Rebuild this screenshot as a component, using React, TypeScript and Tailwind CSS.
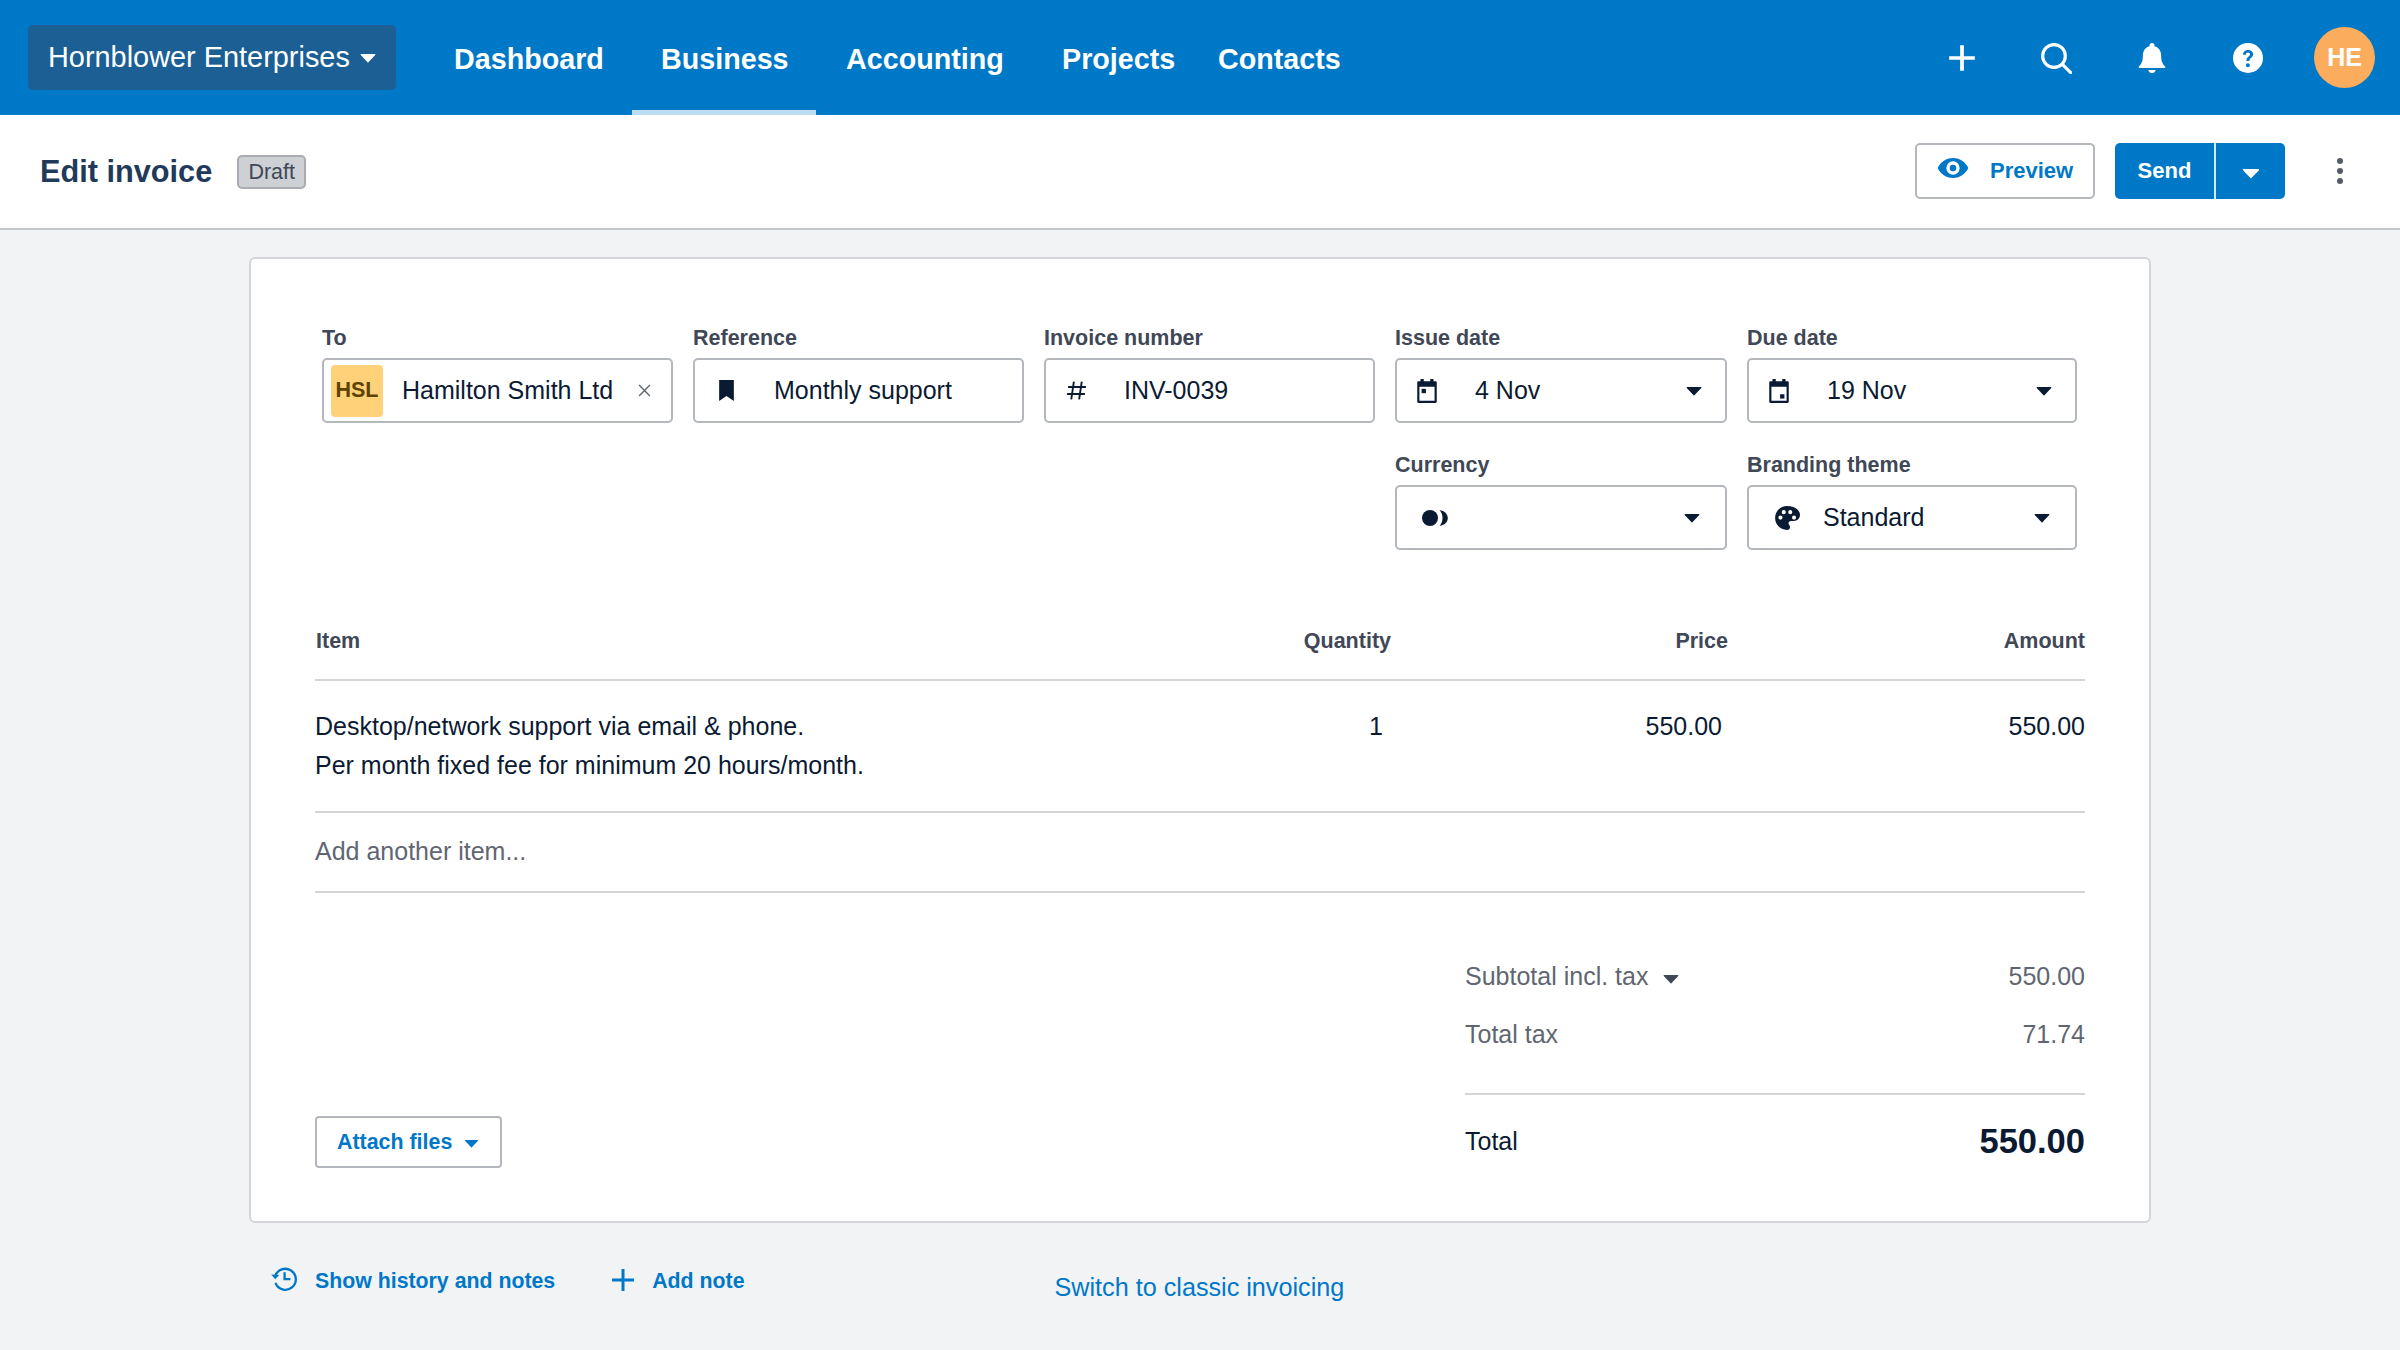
import React from "react";

const Caret = ({ className = "" }: { className?: string }) => (
  <svg viewBox="0 0 16 10" className={className} fill="currentColor">
    <path d="M1.2 1h13.6a.6.6 0 0 1 .45 1L8.4 9.2a.6.6 0 0 1-.85 0L.75 2a.6.6 0 0 1 .45-1z" />
  </svg>
);

const Calendar = ({ dot }: { dot: "left" | "right" }) => (
  <svg viewBox="0 0 24 24" className="w-[26px] h-[26px] text-[#0b1a33]" fill="currentColor">
    <path d="M6 1h3v2h6V1h3v2h2a1 1 0 0 1 1 1v18a1 1 0 0 1-1 1H4a1 1 0 0 1-1-1V4a1 1 0 0 1 1-1h2V1zM5 8v13h14V8H5z" />
    {dot === "left" ? <rect x="7" y="10" width="4" height="4" /> : <rect x="13" y="15" width="4" height="4" />}
  </svg>
);

const Label = ({ children }: { children: React.ReactNode }) => (
  <div className="text-[21.5px] leading-[26px] font-bold text-[#404756] mb-[7px]">{children}</div>
);

const Box = ({ className = "", children }: { className?: string; children: React.ReactNode }) => (
  <div className={`h-[65px] flex items-center bg-white border-2 border-[#b4b8bd] rounded-[5px] text-[25px] text-[#0b1a33] ${className}`}>
    {children}
  </div>
);

const Nav = ({ w, pl, active, children }: { w: string; pl: string; active?: boolean; children: React.ReactNode }) => (
  <div className={`${w} ${pl} h-full flex items-center text-[28.7px] font-bold text-white border-b-[5px] ${active ? "border-[#bcdcf3]" : "border-transparent"}`}>
    <span className="relative top-[5px]">{children}</span>
  </div>
);

export default function App() {
  return (
    <div className="w-[2400px] h-[1350px] overflow-hidden flex flex-col bg-[#f2f3f5] font-['Liberation_Sans',Arial,sans-serif]">
      <header className="h-[115px] shrink-0 bg-[#0078c8] flex items-stretch pl-[28px] pr-[25px]">
        <div className="self-start mt-[25px] w-[368px] h-[65px] rounded-[5px] bg-[#1c5f94] flex items-center pl-[20px] gap-[10px] text-white text-[28.9px]">
          <span>Hornblower Enterprises</span>
          <Caret className="w-[16px] h-[10px]" />
        </div>
        <nav className="ml-[29px] flex h-full">
          <Nav w="w-[207px]" pl="pl-[29px]">Dashboard</Nav>
          <Nav w="w-[184px]" pl="pl-[29px]" active>Business</Nav>
          <Nav w="w-[216px]" pl="pl-[30px]">Accounting</Nav>
          <Nav w="w-[164px]" pl="pl-[30px]">Projects</Nav>
          <Nav w="w-[200px]" pl="pl-[22px]">Contacts</Nav>
        </nav>
        <div className="ml-auto flex items-center">
          <div className="w-[96px] flex justify-center">
            <svg viewBox="0 0 24 24" className="w-[28px] h-[28px] text-white" fill="none" stroke="currentColor" strokeWidth="3.2"><path d="M12 1v22M1 12h22" /></svg>
          </div>
          <div className="w-[94px] flex justify-center -ml-[1px] mr-[1px]">
            <svg viewBox="0 0 24 24" className="w-[32px] h-[32px] text-white" fill="none" stroke="currentColor" strokeWidth="2.4" strokeLinecap="round"><circle cx="10.5" cy="10.5" r="8.5" /><path d="M17 17l6 6" /></svg>
          </div>
          <div className="w-[96px] flex justify-center">
            <svg viewBox="0 0 24 24" className="w-[30px] h-[30px] text-white" fill="currentColor"><path d="M12 0a2 2 0 0 1 2 2v.6c3.4.9 5.3 3.8 5.3 7.4 0 4.4 1 6.6 3.2 8.8.4.5.2 1.2-.6 1.2H2.100c-.8 0-1-.7-.6-1.2C3.700 16.600 4.700 14.400 4.700 10c0-3.600 1.900-6.500 5.300-7.400V2a2 2 0 0 1 2-2zM9 21.500h6c-.4 1.500-1.600 2.500-3 2.500s-2.600-1-3-2.500z" /></svg>
          </div>
          <div className="w-[95px] flex justify-center">
            <svg viewBox="0 0 24 24" className="w-[30px] h-[30px]"><circle cx="12" cy="12" r="12" fill="#fff" /><path d="M8 9.300c0-2.400 1.800-3.800 4.100-3.800 2.300 0 4 1.300 4 3.400 0 2.800-3 2.900-3 5.400h-2.400c0-3.300 2.900-3.400 2.900-5.300 0-.9-.6-1.500-1.600-1.500-1.100 0-1.700.7-1.700 1.800H8z" fill="#0078c8" /><circle cx="11.900" cy="17.700" r="1.600" fill="#0078c8" /></svg>
          </div>
          <div className="ml-[19px] w-[61px] h-[61px] rounded-full bg-[#fbad5d] flex items-center justify-center text-white font-bold text-[25px]">HE</div>
        </div>
      </header>

      <div className="h-[115px] shrink-0 bg-white border-b-2 border-[#c3c6ca] flex items-center pl-[40px] pr-[57px]">
        <h1 className="text-[30.7px] font-bold text-[#223a5a] mt-[2px]">Edit invoice</h1>
        <span className="ml-[25px] w-[69px] h-[34px] mt-[1px] flex items-center justify-center rounded-[5px] bg-[#cdd0d4] border-2 border-[#a9adb3] text-[#404756] text-[21.5px]">Draft</span>
        <div className="ml-auto flex items-center h-[56px] -mt-[2px]">
          <div className="w-[180px] h-[56px] flex items-center pl-[20px] gap-[21px] border-2 border-[#b4b8bd] rounded-[5px] bg-white text-[#0078c8] font-bold text-[22px]">
            <svg viewBox="0 0 24 24" className="w-[32px] h-[32px] -mt-[6px]" fill="currentColor"><path fillRule="evenodd" d="M12 4.500C6.500 4.500 2.300 8 .5 12c1.800 4 6 7.500 11.500 7.500S21.700 16 23.500 12c-1.800-4-6-7.500-11.500-7.500zM12 7a5 5 0 1 1 0 10 5 5 0 0 1 0-10zm0 2.500a2.500 2.500 0 1 0 0 5 2.500 2.500 0 0 0 0-5z" /></svg>
            <span>Preview</span>
          </div>
          <div className="ml-[20px] w-[170px] h-[56px] flex rounded-[5px] bg-[#0078c8] text-white font-bold text-[22px]">
            <div className="w-[101px] flex items-center justify-center border-r-2 border-[#d5e8f5]">Send</div>
            <div className="flex-1 flex items-center justify-center"><Caret className="w-[18px] h-[11px] mt-[5px]" /></div>
          </div>
          <div className="ml-[52px] flex flex-col gap-[4px]">
            <span className="w-[6px] h-[6px] rounded-full bg-[#555c69]" />
            <span className="w-[6px] h-[6px] rounded-full bg-[#555c69]" />
            <span className="w-[6px] h-[6px] rounded-full bg-[#555c69]" />
          </div>
        </div>
      </div>

      <main className="mt-[27px] ml-[249px] w-[1902px] h-[966px] shrink-0 bg-white border-2 border-[#d3d5d8] rounded-[6px] flex flex-col pt-[66px] pl-[64px] pr-[64px]">
        <div className="flex gap-[20px] pl-[7px] pr-[6px]">
          <div className="w-[351px]">
            <Label>To</Label>
            <Box className="pl-[7px]">
              <div className="w-[52px] h-[52px] rounded-[4px] bg-[#ffd27a] flex items-center justify-center font-bold text-[#5c4200] text-[21.5px]">HSL</div>
              <span className="ml-[19px]">Hamilton Smith Ltd</span>
              <svg viewBox="0 0 12 12" className="ml-[25px] w-[13px] h-[13px] text-[#5f6672]" fill="none" stroke="currentColor" strokeWidth="1.3"><path d="M1 1l10 10M11 1L1 11" /></svg>
            </Box>
          </div>
          <div className="w-[331px]">
            <Label>Reference</Label>
            <Box className="pl-[23px]">
              <svg viewBox="0 0 16 20" className="w-[17px] h-[21px] text-[#0b1a33]" fill="currentColor"><path d="M1 0h14v20l-7-4.800L1 20z" /></svg>
              <span className="ml-[39px]">Monthly support</span>
            </Box>
          </div>
          <div className="w-[331px]">
            <Label>Invoice number</Label>
            <Box className="pl-[20px]">
              <svg viewBox="0 0 20 20" className="w-[21px] h-[21px] text-[#0b1a33]" fill="none" stroke="currentColor" strokeWidth="1.8"><path d="M7.500 1.500L5 18.500M15 1.500L12.500 18.500M2 6.700h17M1 13.300h17" /></svg>
              <span className="ml-[37px]">INV-0039</span>
            </Box>
          </div>
          <div className="flex flex-col gap-[29px] w-[682px]">
            <div className="flex gap-[20px]">
              <div className="w-[332px]">
                <Label>Issue date</Label>
                <Box className="pl-[17px] pr-[23px]">
                  <Calendar dot="left" />
                  <span className="ml-[35px]">4 Nov</span>
                  <Caret className="ml-auto w-[16px] h-[10px] text-[#0b1a33]" />
                </Box>
              </div>
              <div className="w-[330px]">
                <Label>Due date</Label>
                <Box className="pl-[17px] pr-[23px]">
                  <Calendar dot="right" />
                  <span className="ml-[35px]">19 Nov</span>
                  <Caret className="ml-auto w-[16px] h-[10px] text-[#0b1a33]" />
                </Box>
              </div>
            </div>
            <div className="flex gap-[20px]">
              <div className="w-[332px]">
                <Label>Currency</Label>
                <Box className="pl-[25px] pr-[25px]">
                  <svg viewBox="0 0 26 16" className="w-[26px] h-[16px] text-[#0b1a33]" fill="currentColor"><ellipse cx="8" cy="8" rx="8" ry="8" /><path d="M17.500 .2c5 .4 8.300 3.700 8.300 7.800s-3.300 7.400-8.300 7.800c2-1.900 3-4.700 3-7.800S19.500 2.100 17.500 .2z" /></svg>
                  <Caret className="ml-auto w-[16px] h-[10px] text-[#0b1a33]" />
                </Box>
              </div>
              <div className="w-[330px]">
                <Label>Branding theme</Label>
                <Box className="pl-[25px] pr-[25px]">
                  <svg viewBox="0 0 24 24" className="w-[26px] h-[26px] text-[#0b1a33]" fill="currentColor"><path fillRule="evenodd" d="M12 1C5.900 1 1 5.900 1 12s4.900 11 11 11c1.700 0 2.800-1.300 2.800-2.800 0-.7-.3-1.300-.7-1.800-.4-.5-.7-1-.7-1.600 0-1.200 1-2.100 2.200-2.100h2.600c3.300 0 5.800-2.500 5.800-5.700C24 4.600 18.600 1 12 1zM6 13.500a1.900 1.900 0 1 1 0-3.800 1.900 1.900 0 0 1 0 3.800zm3-5a1.900 1.900 0 1 1 0-3.800 1.900 1.900 0 0 1 0 3.800zm6 0a1.900 1.900 0 1 1 0-3.800 1.900 1.900 0 0 1 0 3.800zm3.500 5a1.900 1.900 0 1 1 0-3.800 1.900 1.900 0 0 1 0 3.800z" /></svg>
                  <span className="ml-[23px]">Standard</span>
                  <Caret className="ml-auto w-[16px] h-[10px] text-[#0b1a33]" />
                </Box>
              </div>
            </div>
          </div>
        </div>

        <div className="mt-[76px] flex items-center h-[55px] border-b-2 border-[#d3d5d8] pb-[23px] text-[21.5px] font-bold text-[#404756]">
          <span className="flex-1 pl-[1px]">Item</span>
          <span className="w-[200px] text-right">Quantity</span>
          <span className="w-[337px] text-right">Price</span>
          <span className="w-[357px] text-right">Amount</span>
        </div>
        <div className="h-[132px] border-b-2 border-[#d3d5d8] flex items-start pt-[26px] text-[25px] leading-[39px] text-[#0b1a33]">
          <div className="flex-1">
            <div>Desktop/network support via email &amp; phone.</div>
            <div>Per month fixed fee for minimum 20 hours/month.</div>
          </div>
          <span className="w-[200px] pr-[8px] text-right">1</span>
          <span className="w-[337px] pr-[6px] text-right">550.00</span>
          <span className="w-[357px] text-right">550.00</span>
        </div>
        <div className="h-[80px] border-b-2 border-[#d3d5d8] flex items-center text-[25px] text-[#5f6672]">Add another item...</div>

        <div className="flex-1 flex justify-between">
          <button className="self-start mt-[223px] w-[187px] h-[52px] flex items-center pl-[20px] gap-[12px] border-2 border-[#b4b8bd] rounded-[4px] bg-white text-[#0078c8] font-bold text-[21.4px]">
            <span>Attach files</span>
            <Caret className="w-[15px] h-[9px] mt-[3px]" />
          </button>
          <div className="w-[620px] pt-[64px] text-[25px] text-[#5f6672]">
            <div className="flex justify-between h-[40px] items-center">
              <span className="flex items-center gap-[15px]">Subtotal incl. tax <Caret className="w-[16px] h-[10px] text-[#404756] mt-[3px]" /></span>
              <span>550.00</span>
            </div>
            <div className="flex justify-between h-[40px] items-center mt-[18px]">
              <span>Total tax</span>
              <span>71.74</span>
            </div>
            <div className="mt-[38px] border-t-2 border-[#d3d5d8] h-[95px] flex items-center justify-between text-[#0b1a33]">
              <span>Total</span>
              <span className="font-bold text-[34.5px]">550.00</span>
            </div>
          </div>
        </div>
      </main>

      <footer className="flex ml-[270px] mt-[39px] text-[21.3px] font-bold text-[#0078c8]">
        <div className="flex items-center h-[40px]">
          <svg viewBox="0 0 24 24" className="w-[28px] h-[28px] -mt-[8px]" fill="none" stroke="currentColor" strokeWidth="2"><path d="M4.500 10.500A9 9 0 1 1 5 17" strokeLinecap="round" /><path d="M1 9l3.500 4L8 9.500z" fill="currentColor" stroke="none" /><path d="M12.500 7v6h5" /></svg>
          <span className="ml-[17px]">Show history and notes</span>
          <svg viewBox="0 0 24 24" className="ml-[56px] w-[24px] h-[24px] -mt-[4px]" fill="none" stroke="currentColor" strokeWidth="3"><path d="M12 1v22M1 12h22" /></svg>
          <span className="ml-[17px]">Add note</span>
        </div>
        <span className="ml-[310px] mt-[5px] font-normal text-[25.2px] leading-[40px]">Switch to classic invoicing</span>
      </footer>
    </div>
  );
}
